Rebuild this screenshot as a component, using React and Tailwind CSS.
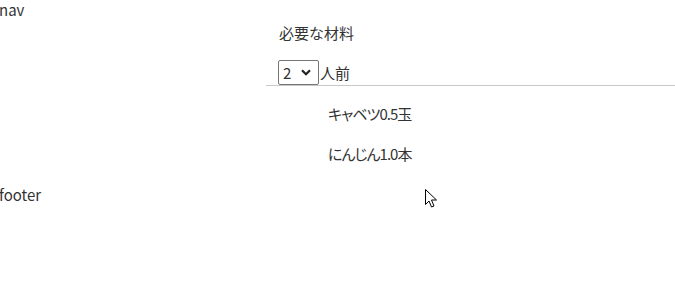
import React from "react";

export default function App() {
  return (
    <div
      className="relative w-[675px] h-[289px] bg-white text-[15px] leading-[20px] text-[#333]"
      style={{ fontFamily: '"Noto Sans CJK JP", "Noto Sans", sans-serif' }}
    >
      <div className="flex">
        <nav className="w-[266px] shrink-0">
          <div className="-ml-[1px]">nav</div>
        </nav>
        <main className="flex-1">
          <div className="pl-[13px] pt-[23px]">必要な材料</div>
          <div className="flex items-end pl-[12px] pt-[17px] border-b border-[#c8c8c8]">
            <div className="relative w-[41px] h-[25px]">
              <select
                defaultValue="2"
                className="appearance-none w-full h-full border border-[#767676] rounded-[2px] pl-[4px] bg-white text-[15px] leading-[20px] outline-none"
              >
                <option value="1">1</option>
                <option value="2">2</option>
                <option value="3">3</option>
                <option value="4">4</option>
              </select>
              <svg
                className="absolute right-[8px] top-[9px] pointer-events-none"
                width="10"
                height="7"
                viewBox="0 0 10 7"
              >
                <path d="M1 1.2 L5 5.2 L9 1.2" fill="none" stroke="#222" strokeWidth="2.2" />
              </svg>
            </div>
            <span className="pl-[1px] pb-[2px]">人前</span>
          </div>
          <ul className="pl-[62px] pt-[18px] flex flex-col gap-[20px] tracking-[-1px] [font-feature-settings:'palt']">
            <li>キャベツ0.5玉</li>
            <li>にんじん1.0本</li>
          </ul>
        </main>
      </div>
      <footer className="mt-[21px]">
        <div className="-ml-[1px]">footer</div>
      </footer>
      <svg
        className="absolute left-[425px] top-[189px]"
        width="13"
        height="20"
        viewBox="0 0 13 20"
      >
        <path
          d="M0.5 0.5 L0.5 15.5 L4 12 L6.5 18 L9 17 L6.5 11 L11.5 11 Z"
          fill="#fff"
          stroke="#000"
          strokeWidth="1"
          strokeLinejoin="miter"
        />
      </svg>
    </div>
  );
}
